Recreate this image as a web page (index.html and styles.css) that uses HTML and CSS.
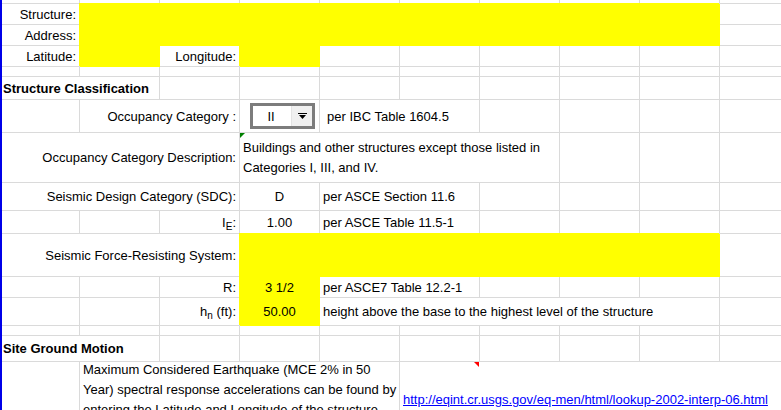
FILE: index.html
```html
<!DOCTYPE html>
<html>
<head>
  <meta charset="utf-8">
  <link rel="stylesheet" href="styles.css">
</head>
<body>
  <div class="sheet">
    <!-- top edge row -->
    <div class="c"></div><div class="c"></div><div class="c"></div><div class="c"></div><div class="c"></div>
    <div class="c"></div><div class="c"></div><div class="c"></div><div class="c"></div><div class="c"></div>

    <!-- project info -->
    <div class="c r">Structure:</div><div class="c y s8"></div><div class="c"></div>
    <div class="c r">Address:</div><div class="c y s8"></div><div class="c"></div>
    <div class="c r">Latitude:</div><div class="c y"></div><div class="c r">Longitude:</div><div class="c y"></div>
    <div class="c"></div><div class="c"></div><div class="c"></div><div class="c"></div><div class="c"></div><div class="c"></div>

    <div class="c"></div><div class="c"></div><div class="c"></div><div class="c"></div><div class="c"></div>
    <div class="c"></div><div class="c"></div><div class="c"></div><div class="c"></div><div class="c"></div>

    <!-- structure classification -->
    <div class="c b s2 first">Structure Classification</div>
    <div class="c"></div><div class="c"></div><div class="c"></div><div class="c"></div>
    <div class="c"></div><div class="c"></div><div class="c"></div><div class="c"></div>

    <div class="c"></div>
    <div class="c r s2">Occupancy Category :</div>
    <div class="c drop-cell">
      <div class="combo">
        <span class="combo-value">II</span>
        <span class="combo-btn">
          <svg width="9" height="6" viewBox="0 0 9 6"><path d="M0 0H9V1H0Z M1 2H8L4.5 6Z" fill="#000"/></svg>
        </span>
      </div>
    </div>
    <div class="c s2 ind">per IBC Table 1604.5</div>
    <div class="c"></div><div class="c"></div><div class="c"></div><div class="c"></div>

    <div class="c r s3">Occupancy Category Description:</div>
    <div class="c s4 wrap">
      <span class="flag-green"></span>
      <span>Buildings and other structures except those listed in<br>Categories I, III, and IV.</span>
    </div>
    <div class="c"></div><div class="c"></div><div class="c"></div>

    <div class="c r s3">Seismic Design Category (SDC):</div>
    <div class="c m">D</div>
    <div class="c s2">per ASCE Section 11.6</div>
    <div class="c"></div><div class="c"></div><div class="c"></div><div class="c"></div>

    <div class="c"></div><div class="c"></div>
    <div class="c r"><span>I<sub>E</sub>:</span></div>
    <div class="c m">1.00</div>
    <div class="c s2">per ASCE Table 11.5-1</div>
    <div class="c"></div><div class="c"></div><div class="c"></div><div class="c"></div>

    <div class="c r s3">Seismic Force-Resisting System:</div>
    <div class="c y s6"></div>
    <div class="c"></div>

    <div class="c"></div><div class="c"></div>
    <div class="c r">R:</div>
    <div class="c y m">3 1/2</div>
    <div class="c s2">per ASCE7 Table 12.2-1</div>
    <div class="c"></div><div class="c"></div><div class="c"></div><div class="c"></div>

    <div class="c"></div><div class="c"></div>
    <div class="c r"><span>h<sub>n</sub> (ft):</span></div>
    <div class="c y m">50.00</div>
    <div class="c s5">height above the base to the highest level of the structure</div>
    <div class="c"></div>

    <div class="c"></div><div class="c"></div><div class="c"></div><div class="c"></div><div class="c"></div>
    <div class="c"></div><div class="c"></div><div class="c"></div><div class="c"></div><div class="c"></div>

    <!-- site ground motion -->
    <div class="c b s2 first">Site Ground Motion</div>
    <div class="c"></div><div class="c"></div><div class="c"></div><div class="c"></div>
    <div class="c"></div><div class="c"></div><div class="c"></div><div class="c"></div>

    <div class="c"></div>
    <div class="c s4 wrap">
      <span>Maximum Considered Earthquake (MCE 2% in 50<br>Year) spectral response accelerations can be found by<br>entering the Latitude and Longitude of the structure<br>at the USGS website:</span>
    </div>
    <div class="c s5 link-cell">
      <span class="flag-red"></span>
      <a href="#">http://eqint.cr.usgs.gov/eq-men/html/lookup-2002-interp-06.html</a>
    </div>
  </div>
</body>
</html>
```

FILE: styles.css
```css
html, body {
  margin: 0;
  padding: 0;
  background: #fff;
}

body {
  width: 781px;
  height: 410px;
  overflow: hidden;
  font-family: "Liberation Sans", Arial, sans-serif;
  font-size: 13px;
  color: #000;
}

.sheet {
  display: grid;
  grid-template-columns: 78px repeat(9, 80px);
  grid-template-rows: 4px 21px 21px 21px 10px 23px 33px 50px 28px 23px 43px 21px 28px 10px 26px 76px;
  border-left: 2px solid #0000e8;
  width: 798px;
}

.c {
  position: relative;
  box-sizing: border-box;
  display: flex;
  align-items: center;
  padding: 0 3px;
  border-right: 1px solid #dadada;
  border-bottom: 1px solid #dadada;
  white-space: nowrap;
  line-height: 15px;
}

.r {
  justify-content: flex-end;
}

.m {
  justify-content: center;
}

.b {
  font-weight: bold;
}

.first {
  padding-left: 1px;
}

.ind {
  padding-left: 7px;
}

.y {
  background: #ffff00;
  border-color: #ffff00;
  box-shadow: -1px -1px 0 #ffff00;
}

.s2 { grid-column: span 2; }
.s3 { grid-column: span 3; }
.s4 { grid-column: span 4; }
.s5 { grid-column: span 5; }
.s6 { grid-column: span 6; }
.s8 { grid-column: span 8; }

.wrap {
  line-height: 19.6px;
}

sub {
  font-size: 10px;
  line-height: 0;
  vertical-align: -3px;
}

/* data validation dropdown */
.drop-cell {
  padding: 0;
  justify-content: center;
}

.combo {
  display: flex;
  box-sizing: border-box;
  width: 65px;
  height: 26px;
  margin-left: 6px;
  border: 3px solid #7c7c7c;
  background: #fff;
}

.combo-value {
  flex: 1;
  display: flex;
  align-items: center;
  justify-content: center;
  padding-right: 2px;
}

.combo-btn {
  width: 20px;
  display: flex;
  align-items: center;
  justify-content: center;
  background: #f0f0f0;
  border-left: 1px solid #e3e3e3;
}

/* cell indicators */
.flag-green {
  position: absolute;
  top: 0;
  left: 0;
  width: 0;
  height: 0;
  border-top: 5px solid #008000;
  border-right: 5px solid transparent;
}

.flag-red {
  position: absolute;
  top: 0;
  left: 74px;
  width: 0;
  height: 0;
  border-top: 5px solid #ff0000;
  border-left: 5px solid transparent;
}

.link-cell a {
  color: #0000ff;
  text-decoration: underline;
}
```
